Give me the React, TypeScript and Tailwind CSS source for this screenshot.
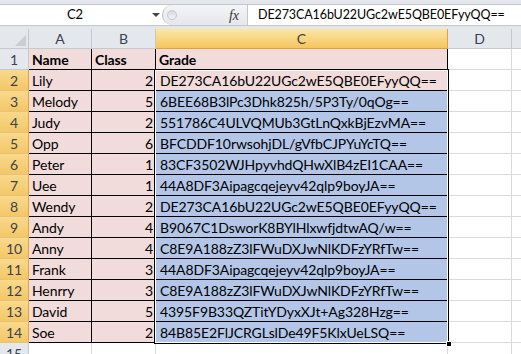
import React from "react";

const rows = [
  ["Lily", "2", "DE273CA16bU22UGc2wE5QBE0EFyyQQ=="],
  ["Melody", "5", "6BEE68B3lPc3Dhk825h/5P3Ty/0qOg=="],
  ["Judy", "2", "551786C4ULVQMUb3GtLnQxkBjEzvMA=="],
  ["Opp", "6", "BFCDDF10rwsohjDL/gVfbCJPYuYcTQ=="],
  ["Peter", "1", "83CF3502WJHpyvhdQHwXlB4zEI1CAA=="],
  ["Uee", "1", "44A8DF3Aipagcqejeyv42qlp9boyJA=="],
  ["Wendy", "2", "DE273CA16bU22UGc2wE5QBE0EFyyQQ=="],
  ["Andy", "4", "B9067C1DsworK8BYlHlxwfjdtwAQ/w=="],
  ["Anny", "4", "C8E9A188zZ3lFWuDXJwNlKDFzYRfTw=="],
  ["Frank", "3", "44A8DF3Aipagcqejeyv42qlp9boyJA=="],
  ["Henrry", "3", "C8E9A188zZ3lFWuDXJwNlKDFzYRfTw=="],
  ["David", "5", "4395F9B33QZTitYDyxXJt+Ag328Hzg=="],
  ["Soe", "2", "84B85E2FlJCRGLslDe49F5KlxUeLSQ=="],
];

function RowHead({ n, sel }: { n: number; sel: boolean }) {
  return (
    <div
      className={
        "w-[29px] shrink-0 flex items-center justify-center border-r border-b text-[14px] tracking-normal text-[#3b4250]" +
        (sel
          ? " bg-gradient-to-b from-[#f9d98c] to-[#f3c766] border-r-[#e2a33c] border-b-[#e9c27a]"
          : " bg-[#e4e8ed] border-[#c4c9d0]")
      }
    >
      {n}
    </div>
  );
}

export default function App() {
  return (
    <div className="w-[521px] h-[354px] overflow-hidden bg-white relative font-[Lato,'Open_Sans',sans-serif] text-black">
      {/* formula bar */}
      <div className="h-[29px] bg-[#e3e6ea] pt-[4px]">
        <div className="flex h-[22px] bg-white border-y border-[#c3c7cd]">
          <div className="w-[150px] flex items-center justify-center text-[13px]">C2</div>
          <div className="w-[12px] flex items-center justify-center">
            <div className="w-0 h-0 border-l-[4px] border-r-[4px] border-t-[4px] border-l-transparent border-r-transparent border-t-[#444]" />
          </div>
          <div className="w-[85px] rounded-l-full bg-gradient-to-b from-[#f4f5f7] to-[#e4e7eb] border-l border-[#b9bec5] flex items-center pl-[4px] pr-[8px]">
            <div className="w-[10px] h-[10px] rounded-full bg-gradient-to-b from-[#d5d9df] to-[#f3f4f6] border border-[#c5cad1]" />
            <span className="ml-auto font-['Liberation_Serif',serif] italic text-[14px] text-[#333]">fx</span>
          </div>
          <div className="flex-1 border-l border-[#c3c7cd] pl-[10px] flex items-center text-[12.5px] tracking-[-0.1px] whitespace-nowrap">
            DE273CA16bU22UGc2wE5QBE0EFyyQQ==
          </div>
        </div>
      </div>

      {/* column headers */}
      <div className="flex h-[20px] text-[14px] text-[#3b4250]">
        <div className="w-[29px] shrink-0 bg-[#e4e8ed] border-r border-b border-[#c4c9d0] relative">
          <svg className="absolute right-[2px] bottom-[2px]" width="11" height="11" viewBox="0 0 11 11">
            <polygon points="11,0 11,11 0,11" fill="#c9ced5" />
          </svg>
        </div>
        <div className="w-[63px] shrink-0 bg-[#e4e8ed] border-r border-b border-[#c4c9d0] flex items-center justify-center">A</div>
        <div className="w-[64px] shrink-0 bg-[#e4e8ed] border-r border-b border-[#c4c9d0] flex items-center justify-center">B</div>
        <div className="w-[292px] shrink-0 bg-gradient-to-b from-[#fbe7a6] to-[#f4c65c] border-r border-b border-r-[#e2a33c] border-b-[#e2a33c] flex items-center justify-center">C</div>
        <div className="w-[64px] shrink-0 bg-[#e4e8ed] border-r border-b border-[#c4c9d0] flex items-center justify-center">D</div>
        <div className="flex-1 bg-[#e4e8ed] border-b border-[#c4c9d0]" />
      </div>

      {/* row 1 */}
      <div className="flex h-[21px] text-[14px] tracking-[-0.1px]">
        <RowHead n={1} sel={false} />
        <div className="w-[63px] shrink-0 bg-[#f2dcdb] border-r border-b border-black pl-[3px] font-bold flex items-center">Name</div>
        <div className="w-[64px] shrink-0 bg-[#f2dcdb] border-r border-b border-black pl-[3px] font-bold flex items-center">Class</div>
        <div className="w-[292px] shrink-0 bg-[#f2dcdb] border-r border-b border-black pl-[3px] font-bold flex items-center">Grade</div>
        <div className="w-[64px] shrink-0 border-r border-b border-[#d8dade]" />
        <div className="flex-1 border-b border-[#d8dade]" />
      </div>

      {rows.map(([name, cls, grade], i) => (
        <div key={i} className="flex h-[21px] text-[14px] tracking-[-0.1px]">
          <RowHead n={i + 2} sel={true} />
          <div className="w-[63px] shrink-0 bg-[#f2dcdb] border-r border-b border-black pl-[3px] flex items-center">{name}</div>
          <div className="w-[64px] shrink-0 bg-[#f2dcdb] border-r border-b border-black pr-[2px] flex items-center justify-end">{cls}</div>
          <div
            className={
              "w-[292px] shrink-0 border-r border-b border-black pl-[4px] flex items-center whitespace-nowrap " +
              (i === 0 ? "bg-[#f2dcdb]" : "bg-[#b4c6e7]")
            }
          >
            {grade}
          </div>
          <div className="w-[64px] shrink-0 border-r border-b border-[#d8dade]" />
          <div className="flex-1 border-b border-[#d8dade]" />
        </div>
      ))}

      {/* row 15 */}
      <div className="flex h-[21px] text-[14px]">
        <RowHead n={15} sel={false} />
        <div className="w-[63px] shrink-0 border-r border-b border-[#d8dade]" />
        <div className="w-[64px] shrink-0 border-r border-b border-[#d8dade]" />
        <div className="w-[292px] shrink-0 border-r border-b border-[#d8dade]" />
        <div className="w-[64px] shrink-0 border-r border-b border-[#d8dade]" />
        <div className="flex-1 border-b border-[#d8dade]" />
      </div>

      {/* selection frame C2:C14 */}
      <div className="absolute left-[154px] top-[69px] w-[295px] h-[275px] border border-black shadow-[inset_0_0_0_1px_white] pointer-events-none">
        <div className="absolute -right-[4px] -bottom-[4px] w-[6px] h-[6px] bg-black border border-white" />
      </div>
    </div>
  );
}
